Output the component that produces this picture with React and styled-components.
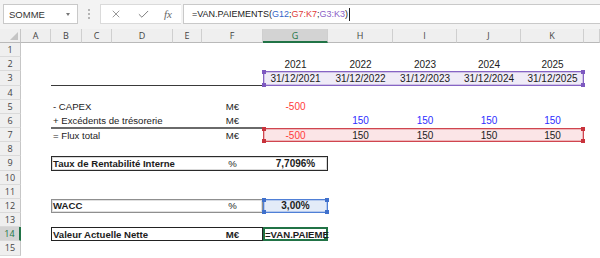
import React from "react";
import styled, { createGlobalStyle } from "styled-components";
import { X, Check } from "lucide-react";

const GlobalStyle = createGlobalStyle`
  html, body { margin: 0; padding: 0; background: #fff; }
  body {
    width: 600px;
    height: 258px;
    overflow: hidden;
    font-family: "Liberation Sans", Arial, sans-serif;
  }
`;

// column widths : row header, A..K, then L takes the rest
const WIDTHS = [21, 30, 31, 30, 61, 29, 61, 65, 65, 64, 64, 63];
const LETTERS = ["A", "B", "C", "D", "E", "F", "G", "H", "I", "J", "K", ""];
const colIndex = (l) => LETTERS.indexOf(l) + 2;

const Page = styled.div`
  width: 600px;
  height: 258px;
  background: #fff;
  overflow: hidden;
`;

const Toolbar = styled.div`
  height: 29px;
  box-sizing: border-box;
  background: #f3f3f3;
  display: flex;
  align-items: flex-start;
  padding: 4px 0 0 3px;
`;

const NameBox = styled.div`
  width: 75px;
  height: 20px;
  box-sizing: border-box;
  background: #fff;
  border: 1px solid #c9c9c9;
  display: flex;
  align-items: center;
  justify-content: space-between;
  padding: 0 5px 0 5px;
  font-size: 9.5px;
  color: #333;
`;

const Caret = styled.span`
  width: 0;
  height: 0;
  border-left: 2.5px solid transparent;
  border-right: 2.5px solid transparent;
  border-top: 3px solid #777;
  margin-right: 2px;
`;

const Dots = styled.div`
  width: 22px;
  height: 20px;
  display: flex;
  flex-direction: column;
  align-items: center;
  justify-content: center;
  gap: 2px;
  span {
    width: 2px;
    height: 2px;
    background: #b5b5b5;
  }
`;

const FnBox = styled.div`
  width: 81px;
  height: 20px;
  box-sizing: border-box;
  background: #fff;
  border: 1px solid #dadada;
  border-right: none;
  display: flex;
  align-items: center;
  padding-left: 9px;
  gap: 15px;
  color: #6b6b6b;
`;

const Fx = styled.span`
  font-family: "Liberation Serif", "Times New Roman", serif;
  font-style: italic;
  font-size: 11px;
  color: #666;
  margin-left: -1px;
`;

const FormulaBox = styled.div`
  flex: 1;
  height: 20px;
  box-sizing: border-box;
  background: #fff;
  border: 1px solid #c9c9c9;
  border-right: none;
  margin-left: 2px;
  display: flex;
  align-items: center;
  padding-left: 8px;
  font-size: 9px;
  color: #222;
  white-space: pre;
`;

const Ref = styled.span`
  color: ${(p) => p.$c};
`;

const Cursor = styled.span`
  width: 1px;
  height: 13px;
  background: #222;
  margin-left: 1px;
`;

const Sheet = styled.div`
  display: grid;
  grid-template-columns: ${WIDTHS.map((w) => w + "px").join(" ")} 1fr;
  grid-template-rows: 14px repeat(15, 14.18px);
`;

const Corner = styled.div`
  grid-column: 1;
  grid-row: 1;
  background: #efefef;
  border-right: 1px solid #c6c6c6;
  border-bottom: 1px solid #b9b9b9;
  position: relative;
  &::after {
    content: "";
    position: absolute;
    right: 2px;
    bottom: 2px;
    width: 0;
    height: 0;
    border-left: 8px solid transparent;
    border-bottom: 8px solid #c4c4c4;
  }
`;

const ColHead = styled.div`
  grid-row: 1;
  box-sizing: border-box;
  background: ${(p) => (p.$active ? "#d3d3d3" : "#efefef")};
  color: ${(p) => (p.$active ? "#217346" : "#444")};
  border-right: 1px solid #cfcfcf;
  border-bottom: ${(p) => (p.$active ? "2px solid #217346" : "1px solid #b9b9b9")};
  display: flex;
  align-items: center;
  justify-content: center;
  font-family: "Open Sans", "Liberation Sans", sans-serif;
  font-size: 9px;
`;

const RowHead = styled.div`
  grid-column: 1;
  box-sizing: border-box;
  background: ${(p) => (p.$active ? "#d3d3d3" : "#efefef")};
  color: ${(p) => (p.$active ? "#217346" : "#444")};
  border-right: ${(p) => (p.$active ? "2px solid #217346" : "1px solid #c6c6c6")};
  border-bottom: 1px solid #dadada;
  display: flex;
  align-items: center;
  justify-content: center;
  font-family: "Open Sans", "Liberation Sans", sans-serif;
  font-size: 9px;
`;

const Cell = styled.div`
  grid-column: ${(p) => p.$col} / span ${(p) => p.$span || 1};
  grid-row: ${(p) => p.$row + 1};
  display: flex;
  align-items: center;
  justify-content: ${(p) =>
    p.$align === "left" ? "flex-start" : p.$align === "right" ? "flex-end" : "center"};
  padding: 0 2px;
  font-size: ${(p) => (p.$label ? "9.6px" : "10px")};
  font-weight: ${(p) => (p.$bold ? 700 : 400)};
  color: ${(p) => p.$color || "#1c1c1c"};
  white-space: nowrap;
  z-index: 2;
`;

const Rule = styled.div`
  grid-column: ${(p) => p.$col} / span ${(p) => p.$span};
  grid-row: ${(p) => p.$row + 1};
  align-self: ${(p) => (p.$top ? "start" : "end")};
  height: 0;
  border-top: ${(p) => p.$line};
  margin-top: ${(p) => (p.$top ? "-1px" : "0")};
`;

const Frame = styled.div`
  grid-column: ${(p) => p.$col} / span ${(p) => p.$span || 1};
  grid-row: ${(p) => p.$row + 1};
  position: relative;
  box-sizing: border-box;
  border: ${(p) => p.$w || 1}px solid ${(p) => p.$color};
  background: ${(p) => p.$fill || "transparent"};
  box-shadow: ${(p) => (p.$glow ? `inset 0 0 0 1px ${p.$glow}` : "none")};
  z-index: 1;
`;

const Handle = styled.span`
  position: absolute;
  width: 4px;
  height: 4px;
  background: ${(p) => p.$color};
  ${(p) => (p.$t ? "top: -2px;" : "bottom: -2px;")}
  ${(p) => (p.$l ? "left: -2px;" : "right: -2px;")}
`;

const Handles = ({ color, only }) =>
  (only || ["tl", "tr", "bl", "br"]).map((k) => (
    <Handle key={k} $color={color} $t={k[0] === "t"} $l={k[1] === "l"} />
  ));

const G = colIndex("G");
const B = colIndex("B");
const F = colIndex("F");
const YEARS = [2021, 2022, 2023, 2024, 2025];

export default function App() {
  return (
    <Page>
      <GlobalStyle />
      <Toolbar>
        <NameBox>
          SOMME
          <Caret />
        </NameBox>
        <Dots>
          <span />
          <span />
          <span />
        </Dots>
        <FnBox>
          <X size={12} strokeWidth={1.4} />
          <Check size={13} strokeWidth={1.6} />
          <Fx>fx</Fx>
        </FnBox>
        <FormulaBox>
          =VAN.PAIEMENTS(<Ref $c="#3465c9">G12</Ref>;<Ref $c="#e03a3a">G7:K7</Ref>;
          <Ref $c="#8a5fc6">G3:K3</Ref>)
          <Cursor />
        </FormulaBox>
      </Toolbar>

      <Sheet>
        <Corner />
        {LETTERS.map((l, i) => (
          <ColHead key={i} style={{ gridColumn: i + 2 }} $active={l === "G"}>
            {l}
          </ColHead>
        ))}
        {Array.from({ length: 15 }, (_, i) => (
          <RowHead key={i} style={{ gridRow: i + 2 }} $active={i + 1 === 14}>
            {i + 1}
          </RowHead>
        ))}

        {/* rows 2-3 : years and dates */}
        {YEARS.map((y, i) => (
          <Cell key={"y" + y} $col={G + i} $row={2}>
            {y}
          </Cell>
        ))}
        <Frame $col={G} $span={5} $row={3} $color="#8664c4" $fill="#efebf7" $glow="rgba(134,100,196,0.3)">
          <Handles color="#7d58c0" />
        </Frame>
        {YEARS.map((y, i) => (
          <Cell key={"d" + y} $col={G + i} $row={3}>
            31/12/{y}
          </Cell>
        ))}
        <Rule $col={B} $span={5} $row={3} $line="1px solid #3a3a3a" />

        {/* rows 5-7 : cash flows */}
        <Cell $col={B} $span={4} $row={5} $align="left" $label>
          - CAPEX
        </Cell>
        <Cell $col={F} $row={5} $label>M€</Cell>
        <Cell $col={G} $row={5} $color="#ff3b3b">-500</Cell>

        <Cell $col={B} $span={4} $row={6} $align="left" $label>
          + Excédents de trésorerie
        </Cell>
        <Cell $col={F} $row={6} $label>M€</Cell>
        {YEARS.slice(1).map((y, i) => (
          <Cell key={"c" + y} $col={G + 1 + i} $row={6} $color="#2e2eff">
            150
          </Cell>
        ))}

        <Rule $col={B} $span={5} $row={7} $top $line="2px solid #6a6a6a" />
        <Cell $col={B} $span={4} $row={7} $align="left" $label>
          = Flux total
        </Cell>
        <Cell $col={F} $row={7} $label>M€</Cell>
        <Frame $col={G} $span={5} $row={7} $color="#d0454f" $fill="#fbe5e7" $glow="rgba(208,69,79,0.3)">
          <Handles color="#c8323c" />
        </Frame>
        <Cell $col={G} $row={7} $color="#ff3b3b">-500</Cell>
        {YEARS.slice(1).map((y, i) => (
          <Cell key={"f" + y} $col={G + 1 + i} $row={7}>
            150
          </Cell>
        ))}

        {/* row 9 : TRI */}
        <Frame $col={B} $span={6} $row={9} $color="#2a2a2a" $glow="rgba(0,0,0,0.15)" />
        <Cell $col={B} $span={4} $row={9} $align="left" $bold $label>
          Taux de Rentabilité Interne
        </Cell>
        <Cell $col={F} $row={9} $label>%</Cell>
        <Cell $col={G} $row={9} $bold>7,7096%</Cell>

        {/* row 12 : WACC */}
        <Frame $col={B} $span={5} $row={12} $color="#8f8f8f" $glow="rgba(0,0,0,0.12)" />
        <Cell $col={B} $span={4} $row={12} $align="left" $bold $label>
          WACC
        </Cell>
        <Cell $col={F} $row={12} $label>%</Cell>
        <Frame $col={G} $row={12} $color="#4f7fd6" $fill="#e3ebf8" $glow="rgba(79,127,214,0.3)">
          <Handles color="#3f70cc" />
        </Frame>
        <Cell $col={G} $row={12} $bold>3,00%</Cell>

        {/* row 14 : VAN */}
        <Frame $col={B} $span={5} $row={14} $color="#222" />
        <Cell $col={B} $span={4} $row={14} $align="left" $bold $label>
          Valeur Actuelle Nette
        </Cell>
        <Cell $col={F} $row={14} $bold $label>M€</Cell>
        <Frame $col={G} $row={14} $w={2} $color="#217346">
          <Handles color="#217346" only={["br"]} />
        </Frame>
        <Cell $col={G} $row={14} $align="left" $bold $label>
          =VAN.PAIEME
        </Cell>
      </Sheet>
    </Page>
  );
}
